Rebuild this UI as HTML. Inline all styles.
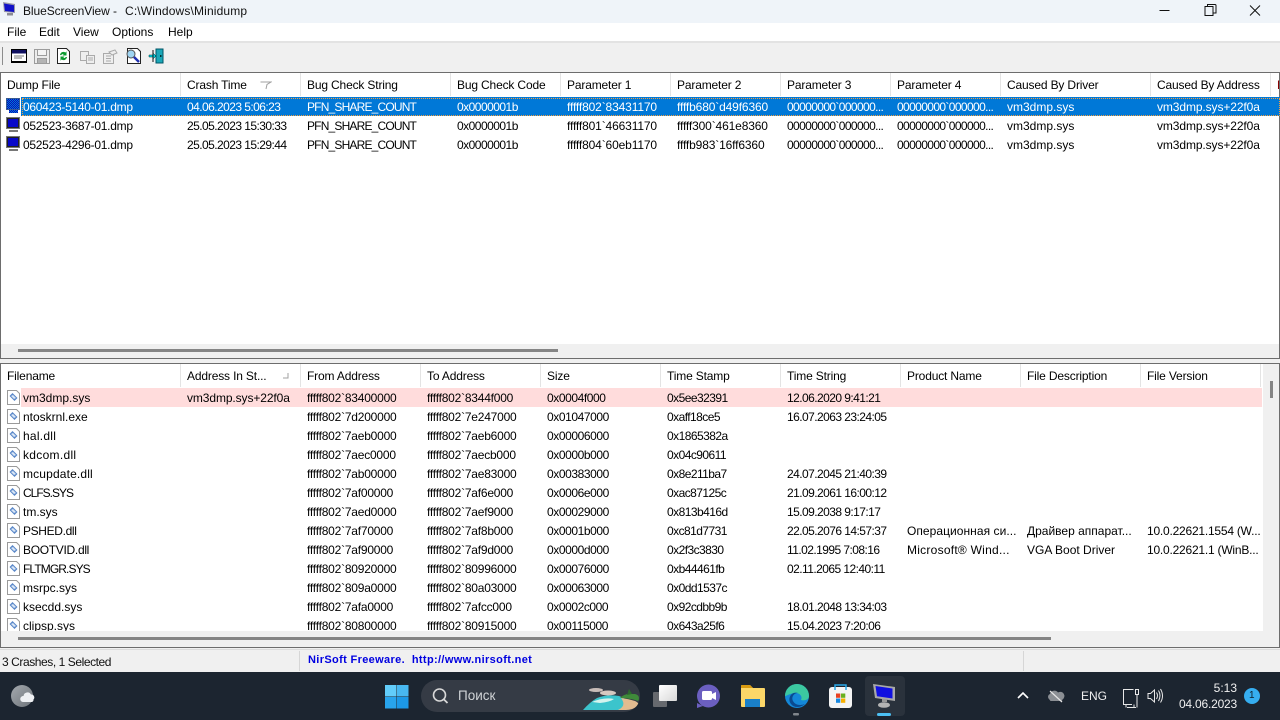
<!DOCTYPE html>
<html><head><meta charset="utf-8"><title>BlueScreenView</title>
<style>
html,body{margin:0;padding:0;width:1280px;height:720px;overflow:hidden;background:#f0f0f0;font:12px "Liberation Sans",sans-serif;color:#000}
.a{position:absolute}
.t{position:absolute;white-space:nowrap}
.h,.r{position:absolute;left:0;white-space:nowrap}
.h span,.r span{position:absolute;top:0;overflow:hidden;display:block;padding-left:6px;box-sizing:border-box}
.h{height:23px;line-height:25px;background:#fff;letter-spacing:-.16px}
.h span{height:23px;border-right:1px solid #e4e4e4}
.r{height:19px;line-height:21px;width:1262px}
.r span{height:19px}
.top span[style^="left:17px"]{letter-spacing:-.28px}
.top span[style^="left:181px"]{letter-spacing:-.56px}
.top span[style^="left:301px"]{letter-spacing:-.82px}
.top span[style^="left:451px"]{letter-spacing:-.52px}
.top span[style^="left:561px"],.top span[style^="left:671px"]{letter-spacing:-.14px}
.top span[style^="left:781px"],.top span[style^="left:891px"]{letter-spacing:-.62px}
.top span[style^="left:1151px"]{letter-spacing:-.1px}
.low span[style^="left:181px"]{letter-spacing:-.1px}
.low span[style^="left:301px"],.low span[style^="left:421px"]{letter-spacing:-.22px}
.low span[style^="left:541px"]{letter-spacing:-.42px}
.low span[style^="left:661px"]{letter-spacing:-.55px}
.low span[style^="left:781px"]{letter-spacing:-.56px}
.low span[style^="left:1141px"]{letter-spacing:-.22px}
svg{position:absolute;display:block}
</style></head><body>
<!-- title -->
<div class="a" style="left:0;top:0;width:1280px;height:23px;background:#eff4f9"></div>
<svg style="left:2px;top:2px" width="15" height="15" viewBox="0 0 15 15"><path d="M1 0l12 2v9L2 10z" fill="#9a9aa8"/><path d="M2 1.500l10 1.700v6.800L3 9z" fill="#1010c8"/><path d="M5 11h6v2.500H5z" fill="#8b8b95"/></svg>
<div class="t" style="left:23px;top:3px;line-height:17px;color:#111;letter-spacing:-.08px">BlueScreenView</div>
<div class="t" style="left:113px;top:3px;line-height:17px;color:#111">-</div>
<div class="t" style="left:125px;top:3px;line-height:17px;color:#111;letter-spacing:.15px">C:\Windows\Minidump</div>
<svg style="left:1150px;top:0" width="120" height="22" viewBox="0 0 120 22" fill="none" stroke="#111"><path d="M9.500 10.500h10"/><path d="M55 6.500h8v9h-8zM57.500 6.500V4.500h7.500a1 1 0 0 1 1 1v7.500h-3"/><path d="M100 5.500l10 10M110 5.500l-10 10"/></svg>
<!-- menu -->
<div class="a" style="left:0;top:23px;width:1280px;height:18px;background:#fff"></div>
<div class="t" style="left:7px;top:23px;line-height:18px">File</div>
<div class="t" style="left:39px;top:23px;line-height:18px">Edit</div>
<div class="t" style="left:73px;top:23px;line-height:18px">View</div>
<div class="t" style="left:112px;top:23px;line-height:18px">Options</div>
<div class="t" style="left:168px;top:23px;line-height:18px">Help</div>
<div class="a" style="left:0;top:41px;width:1280px;height:2px;background:#e3e3e3"></div>
<!-- toolbar -->
<div class="a" style="left:2px;top:47px;width:1px;height:18px;background:#8c8c8c"></div>
<svg style="left:10px;top:48px" width="160" height="17" viewBox="0 0 160 17">
<g><rect x="1.500" y="1.500" width="15" height="13" fill="#fff" stroke="#000"/><rect x="2" y="2" width="14" height="3.500" fill="#101060"/><path d="M4 8h10M4 10h8" stroke="#777"/><rect x="1" y="13" width="16" height="2" fill="#000"/></g>
<g fill="#ececec" stroke="#9c9c9c"><rect x="24.500" y="1.500" width="15" height="14"/><rect x="27.500" y="1.500" width="9" height="6" fill="#f4f4f4"/><rect x="27.500" y="10.500" width="9" height="5" fill="#b4b4b4"/></g>
<g><path d="M47.500 .500h9l3 3v12h-12z" fill="#fff" stroke="#222"/><path d="M50 7a3.500 3.500 0 0 1 5.500-2.500l1-1.200v4.200h-4l1.200-1.200a2 2 0 0 0-2.500 1zM57 9a3.500 3.500 0 0 1-5.500 2.500l-1 1.200V8.500h4l-1.200 1.200a2 2 0 0 0 2.500-.7z" fill="#0c9a30"/></g>
<g fill="#eee" stroke="#aaa"><path d="M70.500 3.500h8v9h-8z"/><path d="M76.500 7.500h8v8h-8z"/><path d="M78 10h5M78 12h5" /></g>
<g fill="#eee" stroke="#aaa"><path d="M93.500 5.500h10v10h-10z"/><path d="M96 8h5M96 10.500h5M96 13h5"/><path d="M99 4l6-2 2 3-5 2z"/></g>
<g><path d="M117.500 .500h10l3 3v12h-13z" fill="#fff" stroke="#222"/><circle cx="121" cy="6" r="4" fill="#9fd4f2" stroke="#555"/><path d="M124 9l5 5" stroke="#2030b0" stroke-width="2.500"/></g>
<g><rect x="146" y="1" width="7" height="14" fill="#1aa7b8" stroke="#056"/><path d="M139 7h4V5l3 3-3 3V9h-4z" fill="#00d8e8" stroke="#033" stroke-width=".5"/><path d="M143 2v12" stroke="#111"/><rect x="150" y="7" width="1.500" height="2" fill="#033"/></g>
</svg>
<!-- top list -->
<div class="a" style="left:0;top:72px;width:1280px;height:287px;box-sizing:border-box;border:1px solid #6d6d6d;background:#fff"></div>
<div class="h" style="top:73px;width:1278px;left:1px">
<span style="left:-1px;width:181px;padding-left:7px">Dump File</span><span style="left:180px;width:120px">Crash Time</span><span style="left:300px;width:150px">Bug Check String</span><span style="left:450px;width:110px">Bug Check Code</span><span style="left:560px;width:110px">Parameter 1</span><span style="left:670px;width:110px">Parameter 2</span><span style="left:780px;width:110px">Parameter 3</span><span style="left:890px;width:110px">Parameter 4</span><span style="left:1000px;width:150px">Caused By Driver</span><span style="left:1150px;width:120px">Caused By Address</span><span style="left:1270px;width:8px;color:#800;border:0">P</span>
</div>
<svg style="left:260px;top:81px" width="12" height="9" viewBox="0 0 12 9"><path d="M.5 1h10.500L7 3.500 6 8" fill="none" stroke="#a0a0a0"/></svg>
<div class="a" style="left:21px;top:97px;width:1259px;height:19px;background:#0078d7"></div>
<div class="a" style="left:21.500px;top:97.500px;width:1258px;height:18px;box-sizing:border-box;border:1px dotted #f2a040"></div>
<div class="r top" style="top:97px;color:#fff"><span style="left:17px;width:164px">060423-5140-01.dmp</span><span style="left:181px;width:120px">04.06.2023 5:06:23</span><span style="left:301px;width:150px">PFN_SHARE_COUNT</span><span style="left:451px;width:110px">0x0000001b</span><span style="left:561px;width:110px">fffff802`83431170</span><span style="left:671px;width:110px">ffffb680`d49f6360</span><span style="left:781px;width:110px">00000000`000000...</span><span style="left:891px;width:110px">00000000`000000...</span><span style="left:1001px;width:150px">vm3dmp.sys</span><span style="left:1151px;width:120px">vm3dmp.sys+22f0a</span></div>
<div class="r top" style="top:116px"><span style="left:17px;width:164px">052523-3687-01.dmp</span><span style="left:181px;width:120px">25.05.2023 15:30:33</span><span style="left:301px;width:150px">PFN_SHARE_COUNT</span><span style="left:451px;width:110px">0x0000001b</span><span style="left:561px;width:110px">fffff801`46631170</span><span style="left:671px;width:110px">fffff300`461e8360</span><span style="left:781px;width:110px">00000000`000000...</span><span style="left:891px;width:110px">00000000`000000...</span><span style="left:1001px;width:150px">vm3dmp.sys</span><span style="left:1151px;width:120px">vm3dmp.sys+22f0a</span></div>
<div class="r top" style="top:135px"><span style="left:17px;width:164px">052523-4296-01.dmp</span><span style="left:181px;width:120px">25.05.2023 15:29:44</span><span style="left:301px;width:150px">PFN_SHARE_COUNT</span><span style="left:451px;width:110px">0x0000001b</span><span style="left:561px;width:110px">fffff804`60eb1170</span><span style="left:671px;width:110px">ffffb983`16ff6360</span><span style="left:781px;width:110px">00000000`000000...</span><span style="left:891px;width:110px">00000000`000000...</span><span style="left:1001px;width:150px">vm3dmp.sys</span><span style="left:1151px;width:120px">vm3dmp.sys+22f0a</span></div>
<svg style="left:6px;top:98px" width="15" height="56" viewBox="0 0 15 56"><defs><pattern id="dp" width="2" height="2" patternUnits="userSpaceOnUse"><rect width="2" height="2" fill="#0a0ab8"/><rect width="1" height="1" fill="#0078d7"/><rect x="1" y="1" width="1" height="1" fill="#0078d7"/></pattern></defs><g><rect x=".5" y=".5" width="13" height="11" fill="#000080" stroke="#3a5a90"/><rect x="1" y="1" width="12" height="10" fill="url(#dp)"/><rect x="3" y="12" width="9" height="3" fill="url(#dp)"/></g><g transform="translate(0,19)"><rect x=".5" y=".5" width="13" height="11" fill="#222" stroke="#777"/><rect x="2" y="2" width="10" height="8" fill="#0808c8"/><rect x="3" y="13" width="9" height="2" fill="#777"/></g><g transform="translate(0,38)"><rect x=".5" y=".5" width="13" height="11" fill="#222" stroke="#777"/><rect x="2" y="2" width="10" height="8" fill="#0808c8"/><rect x="3" y="13" width="9" height="2" fill="#777"/></g></svg>
<div class="a" style="left:1px;top:344px;width:1278px;height:14px;background:#f0f0f0"></div>
<div class="a" style="left:18px;top:349px;width:540px;height:3px;background:#858585"></div>
<!-- bottom list -->
<div class="a" style="left:0;top:363px;width:1280px;height:285px;box-sizing:border-box;border:1px solid #6d6d6d;background:#fff"></div>
<div class="h" style="top:364px;width:1262px;left:1px">
<span style="left:-1px;width:181px;padding-left:7px">Filename</span><span style="left:180px;width:120px">Address In St...</span><span style="left:300px;width:120px">From Address</span><span style="left:420px;width:120px">To Address</span><span style="left:540px;width:120px">Size</span><span style="left:660px;width:120px">Time Stamp</span><span style="left:780px;width:120px">Time String</span><span style="left:900px;width:120px">Product Name</span><span style="left:1020px;width:120px">File Description</span><span style="left:1140px;width:120px">File Version</span>
</div>
<svg style="left:282px;top:372px" width="8" height="8" viewBox="0 0 8 8"><path d="M6 1v5H1" fill="none" stroke="#a0a0a0"/></svg>
<div class="a" style="left:21px;top:388px;width:1241px;height:19px;background:#ffdcdc"></div>
<div class="a" style="left:1px;top:388px;width:1263px;height:243px;overflow:hidden">
<div class="r low" style="top:0;left:-1px"><span style="left:17px;width:164px">vm3dmp.sys</span><span style="left:181px;width:120px">vm3dmp.sys+22f0a</span><span style="left:301px;width:120px">fffff802`83400000</span><span style="left:421px;width:120px">fffff802`8344f000</span><span style="left:541px;width:120px">0x0004f000</span><span style="left:661px;width:120px">0x5ee32391</span><span style="left:781px;width:120px">12.06.2020 9:41:21</span></div>
<div class="r low" style="top:19px;left:-1px"><span style="left:17px;width:164px">ntoskrnl.exe</span><span style="left:301px;width:120px">fffff802`7d200000</span><span style="left:421px;width:120px">fffff802`7e247000</span><span style="left:541px;width:120px">0x01047000</span><span style="left:661px;width:120px">0xaff18ce5</span><span style="left:781px;width:120px">16.07.2063 23:24:05</span></div>
<div class="r low" style="top:38px;left:-1px"><span style="left:17px;width:164px;letter-spacing:.25px">hal.dll</span><span style="left:301px;width:120px">fffff802`7aeb0000</span><span style="left:421px;width:120px">fffff802`7aeb6000</span><span style="left:541px;width:120px">0x00006000</span><span style="left:661px;width:120px">0x1865382a</span></div>
<div class="r low" style="top:57px;left:-1px"><span style="left:17px;width:164px;letter-spacing:.3px">kdcom.dll</span><span style="left:301px;width:120px">fffff802`7aec0000</span><span style="left:421px;width:120px">fffff802`7aecb000</span><span style="left:541px;width:120px">0x0000b000</span><span style="left:661px;width:120px">0x04c90611</span></div>
<div class="r low" style="top:76px;left:-1px"><span style="left:17px;width:164px;letter-spacing:.15px">mcupdate.dll</span><span style="left:301px;width:120px">fffff802`7ab00000</span><span style="left:421px;width:120px">fffff802`7ae83000</span><span style="left:541px;width:120px">0x00383000</span><span style="left:661px;width:120px">0x8e211ba7</span><span style="left:781px;width:120px">24.07.2045 21:40:39</span></div>
<div class="r low" style="top:95px;left:-1px"><span style="left:17px;width:164px;letter-spacing:-1px">CLFS.SYS</span><span style="left:301px;width:120px">fffff802`7af00000</span><span style="left:421px;width:120px">fffff802`7af6e000</span><span style="left:541px;width:120px">0x0006e000</span><span style="left:661px;width:120px">0xac87125c</span><span style="left:781px;width:120px">21.09.2061 16:00:12</span></div>
<div class="r low" style="top:114px;left:-1px"><span style="left:17px;width:164px">tm.sys</span><span style="left:301px;width:120px">fffff802`7aed0000</span><span style="left:421px;width:120px">fffff802`7aef9000</span><span style="left:541px;width:120px">0x00029000</span><span style="left:661px;width:120px">0x813b416d</span><span style="left:781px;width:120px">15.09.2038 9:17:17</span></div>
<div class="r low" style="top:133px;left:-1px"><span style="left:17px;width:164px;letter-spacing:-.35px">PSHED.dll</span><span style="left:301px;width:120px">fffff802`7af70000</span><span style="left:421px;width:120px">fffff802`7af8b000</span><span style="left:541px;width:120px">0x0001b000</span><span style="left:661px;width:120px">0xc81d7731</span><span style="left:781px;width:120px">22.05.2076 14:57:37</span><span style="left:901px;width:120px;letter-spacing:.05px">Операционная си...</span><span style="left:1021px;width:120px">Драйвер аппарат...</span><span style="left:1141px;width:120px">10.0.22621.1554 (W...</span></div>
<div class="r low" style="top:152px;left:-1px"><span style="left:17px;width:164px;letter-spacing:-.3px">BOOTVID.dll</span><span style="left:301px;width:120px">fffff802`7af90000</span><span style="left:421px;width:120px">fffff802`7af9d000</span><span style="left:541px;width:120px">0x0000d000</span><span style="left:661px;width:120px">0x2f3c3830</span><span style="left:781px;width:120px">11.02.1995 7:08:16</span><span style="left:901px;width:120px;letter-spacing:.25px">Microsoft® Wind...</span><span style="left:1021px;width:120px">VGA Boot Driver</span><span style="left:1141px;width:120px">10.0.22621.1 (WinB...</span></div>
<div class="r low" style="top:171px;left:-1px"><span style="left:17px;width:164px;letter-spacing:-.9px">FLTMGR.SYS</span><span style="left:301px;width:120px">fffff802`80920000</span><span style="left:421px;width:120px">fffff802`80996000</span><span style="left:541px;width:120px">0x00076000</span><span style="left:661px;width:120px">0xb44461fb</span><span style="left:781px;width:120px">02.11.2065 12:40:11</span></div>
<div class="r low" style="top:190px;left:-1px"><span style="left:17px;width:164px">msrpc.sys</span><span style="left:301px;width:120px">fffff802`809a0000</span><span style="left:421px;width:120px">fffff802`80a03000</span><span style="left:541px;width:120px">0x00063000</span><span style="left:661px;width:120px">0x0dd1537c</span></div>
<div class="r low" style="top:209px;left:-1px"><span style="left:17px;width:164px">ksecdd.sys</span><span style="left:301px;width:120px">fffff802`7afa0000</span><span style="left:421px;width:120px">fffff802`7afcc000</span><span style="left:541px;width:120px">0x0002c000</span><span style="left:661px;width:120px">0x92cdbb9b</span><span style="left:781px;width:120px">18.01.2048 13:34:03</span></div>
<div class="r low" style="top:228px;left:-1px"><span style="left:17px;width:164px">clipsp.sys</span><span style="left:301px;width:120px">fffff802`80800000</span><span style="left:421px;width:120px">fffff802`80915000</span><span style="left:541px;width:120px">0x00115000</span><span style="left:661px;width:120px">0x643a25f6</span><span style="left:781px;width:120px">15.04.2023 7:20:06</span></div>
<svg style="left:6px;top:2px" width="14" height="243" viewBox="0 0 14 243"><defs><g id="f"><path d="M.5 .500h9l3 3v11H.5z" fill="#fff" stroke="#9a9a9a"/><path d="M2.500 6l3-3 5 5-3 3z" fill="#5a87c8"/><path d="M4 6l2-1 3 3-2 1z" fill="#d8e6f6"/></g></defs>
<use href="#f"/><use href="#f" y="19"/><use href="#f" y="38"/><use href="#f" y="57"/><use href="#f" y="76"/><use href="#f" y="95"/><use href="#f" y="114"/><use href="#f" y="133"/><use href="#f" y="152"/><use href="#f" y="171"/><use href="#f" y="190"/><use href="#f" y="209"/><use href="#f" y="228"/></svg>
</div>
<div class="a" style="left:1px;top:631px;width:1278px;height:16px;background:#f0f0f0"></div>
<div class="a" style="left:18px;top:637px;width:1033px;height:3px;background:#858585"></div>
<div class="a" style="left:1263px;top:364px;width:16px;height:283px;background:#f0f0f0"></div>
<div class="a" style="left:1270px;top:381px;width:3px;height:17px;background:#858585"></div>
<!-- status -->
<div class="a" style="left:0;top:649px;width:1280px;height:1px;background:#dcdcdc"></div>
<div class="t" style="left:2px;top:653px;line-height:19px;color:#111;letter-spacing:-.43px">3 Crashes, 1 Selected</div>
<div class="a" style="left:299px;top:651px;width:1px;height:20px;background:#d6d6d6"></div>
<div class="a" style="left:1023px;top:651px;width:1px;height:20px;background:#d6d6d6"></div>
<div class="t" style="left:308px;top:651px;line-height:19px;color:#0000e0;font-weight:bold;font-size:11px;letter-spacing:.35px">NirSoft Freeware. &nbsp;http://www.nirsoft.net</div>
<!-- taskbar -->
<div class="a" style="left:0;top:672px;width:1280px;height:48px;background:#1c2530"></div>
<svg style="left:0;top:672px" width="1280" height="48" viewBox="0 672 1280 48">
<defs><linearGradient id="mo" x1="0" y1="0" x2="1" y2="1"><stop offset="0" stop-color="#a4a9ae"/><stop offset="1" stop-color="#6e747a"/></linearGradient><linearGradient id="sq" x1="0" y1="0" x2="1" y2="1"><stop offset="0" stop-color="#ffffff"/><stop offset="1" stop-color="#d8d8d8"/></linearGradient></defs>
<circle cx="22" cy="696" r="11" fill="url(#mo)"/><path d="M23 702a3 3 0 0 1 .5-6 4 4 0 0 1 7.500-1.500 3 3 0 0 1 2.500 5 2.500 2.500 0 0 1-1.500 2.500z" fill="#eef0f3"/>
<rect x="385" y="685" width="11.500" height="11.500" fill="#62cdfa"/><rect x="397" y="685" width="11.500" height="11.500" fill="#48b8f0"/><rect x="385" y="697" width="11.500" height="11.500" fill="#28a4ec"/><rect x="397" y="697" width="11.500" height="11.500" fill="#1c98e6"/>
<rect x="421" y="680" width="219" height="32" rx="16" fill="#353b45"/>
<circle cx="439.500" cy="695" r="6" fill="none" stroke="#d8d8d8" stroke-width="1.600"/><path d="M444 699.500l3.500 3.500" stroke="#d8d8d8" stroke-width="1.800"/>
<path d="M583 710q7-8 14-12 10-4 22-2 6 2 10 6-1 8-9 8z" fill="#3cc4cc"/><path d="M592 702q12-5 22-3-4 3-14 4z" fill="#d4f4ee"/><path d="M621 698q8 1 14 3 4 2 3 3-3 6-12 6h-8q9-4 3-12z" fill="#e2bc90"/><path d="M620 698q4-4 9-4h6q4 1 4 4 0 2-1 3-8-3-18-3z" fill="#3f8a3a"/><path d="M627 695l2-6 3 5z" fill="#2c6a2c"/><ellipse cx="596" cy="690" rx="7" ry="2" fill="#c8bcb8"/><ellipse cx="608" cy="693" rx="8" ry="2.500" fill="#d6c8c0"/>
<rect x="653" y="692" width="14" height="15" rx="1" fill="#66696e"/><rect x="659" y="685" width="18" height="16" rx="1" fill="url(#sq)"/>
<circle cx="708.500" cy="696" r="11.500" fill="#6b5fc0"/><path d="M697 703v5l6-2z" fill="#6b5fc0"/><rect x="702" y="691" width="10" height="9" rx="1.500" fill="#fff"/><path d="M712 694l4-2v8l-4-2z" fill="#fff"/>
<path d="M741 686a1 1 0 0 1 1-1h8l3 3h11a1 1 0 0 1 1 1v17a1 1 0 0 1-1 1h-22a1 1 0 0 1-1-1z" fill="#fcd768"/><path d="M741 686a1 1 0 0 1 1-1h8l3 3h-12z" fill="#d89a10"/><rect x="745" y="699" width="15" height="8" fill="#1a80c8"/>
<circle cx="797" cy="696" r="12" fill="#1488d8"/><path d="M785 696a12 12 0 0 1 24 0c0 4-5 5-8 4 2-4-2-7-5-7-6 0-9 3-11 3z" fill="#3cc8a0"/><path d="M798 693c-4 0-7 4-5 8 2 4 7 5 12 3-5 4-11 4-14 0-4-5 0-13 7-11z" fill="#0a4a90"/>
<rect x="793" y="713" width="6" height="2.500" rx="1" fill="#80868c"/>
<rect x="829" y="687" width="23" height="21" rx="3" fill="#f4f4f4"/><path d="M835 690v-5h11v5" fill="none" stroke="#2aa8e8" stroke-width="1.500"/><rect x="836" y="693.500" width="4.300" height="4.300" fill="#e84020"/><rect x="841" y="693.500" width="4.300" height="4.300" fill="#68b020"/><rect x="836" y="698.500" width="4.300" height="4.300" fill="#1888e0"/><rect x="841" y="698.500" width="4.300" height="4.300" fill="#f8b000"/>
<rect x="865" y="676" width="40" height="40" rx="4" fill="#2a323c"/>
<path d="M873 684l22 3v14l-20-3z" fill="#a8a8a8"/><path d="M875.500 686l17 2.500v10l-15.500-2.300z" fill="#1010e0"/><path d="M882 699h5v3h-5z" fill="#999"/><ellipse cx="884" cy="705" rx="6" ry="2.800" fill="#b4b4b4"/>
<rect x="877" y="713" width="14" height="3" rx="1.500" fill="#4cc0f4"/>
<path d="M1018 698l5-5 5 5" fill="none" stroke="#fff" stroke-width="1.600"/>
<path d="M1049 699a3 3 0 0 1 1-5 4.500 4.500 0 0 1 8-1.500 4 4 0 0 1 4.500 7 2 2 0 0 1-1 1.500h-11z" fill="#8b8f94"/><path d="M1050 691l12 11" stroke="#e6e6e6" stroke-width="1.200"/>
<g fill="none" stroke="#e8e8e8"><path d="M1132 704.500h-8.500v-15h10"/><path d="M1126 704.500v3M1134 704.500v3M1127 707.500h9"/><rect x="1135.500" y="689.500" width="3" height="5"/><path d="M1137 694.500v13"/>
<path d="M1148 693.500h2.500l4-3.500v12l-4-3.500h-2.500z"/><path d="M1156.500 692.500q2 3 0 6.500M1158.500 690.500q3 5 0 10.500M1160.500 689q4 7 0 13.500"/></g>
<circle cx="1252" cy="696" r="8" fill="#36aef0"/>
</svg>
<div class="t" style="left:458px;top:687px;font-size:13.500px;line-height:17px;color:#d0d3d6">Поиск</div>
<div class="t" style="left:1081px;top:689px;line-height:15px;color:#f0f0f0">ENG</div>
<div class="t" style="left:1160px;width:77px;text-align:right;top:681px;line-height:15px;color:#f0f0f0">5:13</div>
<div class="t" style="left:1160px;width:77px;text-align:right;top:696px;line-height:16px;color:#f0f0f0;letter-spacing:-.2px">04.06.2023</div>
<div class="t" style="left:1249px;top:689px;font-size:10px;line-height:14px;color:#10202c">1</div>
</body></html>
